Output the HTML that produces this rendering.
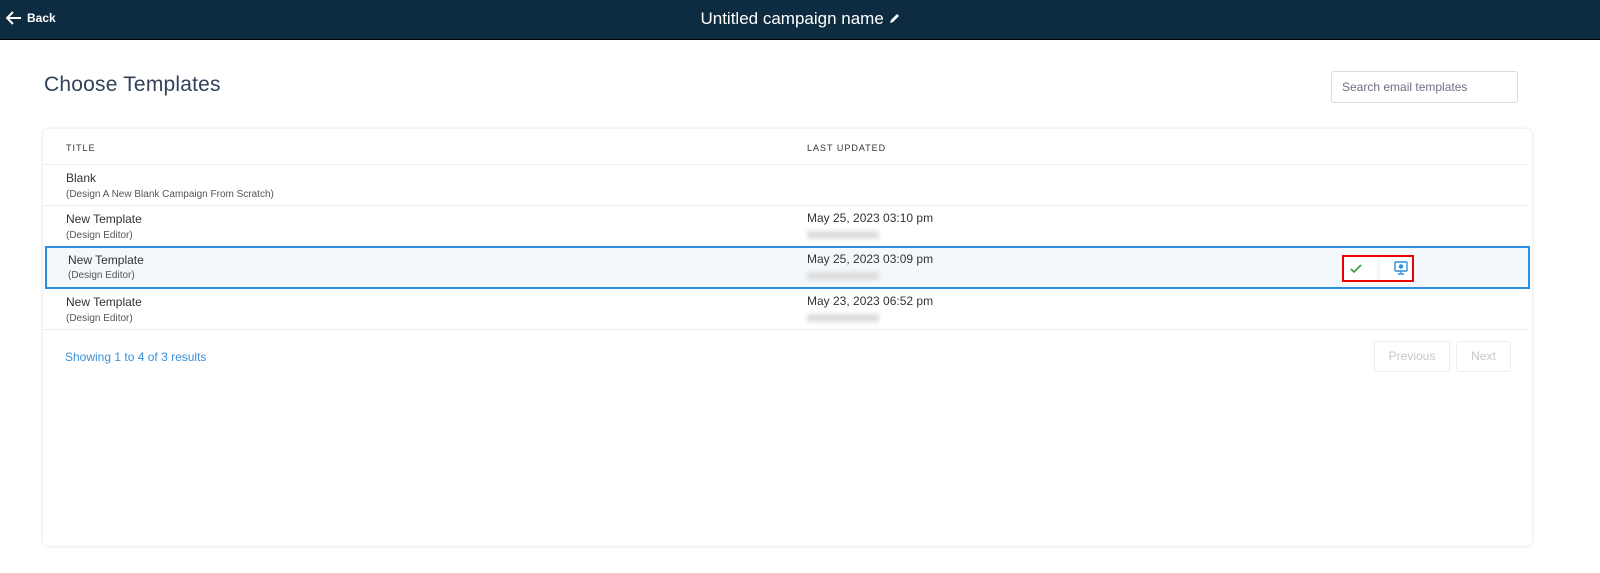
<!DOCTYPE html>
<html><head><style>
*{box-sizing:border-box;margin:0;padding:0}
body{width:1600px;height:573px;background:#fff;font-family:"Liberation Sans",Arial,sans-serif;position:relative;overflow:hidden}
.top{position:absolute;left:0;top:0;width:1600px;height:40px;background:#0e2c41;border-bottom:1px solid #000}
.back{position:absolute;left:6px;top:11px;color:#fff;font-size:12px;font-weight:bold;display:flex;align-items:center;gap:5px}
.title{position:absolute;left:0;right:0;top:9px;text-align:center;color:#fff;font-size:17px}
h1{position:absolute;left:44px;top:73px;font-size:21px;font-weight:normal;color:#33425a;letter-spacing:.2px}
.search{position:absolute;left:1331px;top:71px;width:187px;height:32px;border:1px solid #d8dbe0;border-radius:3px;font-size:12px;color:#6b7280;padding:8px 10px}
.card{position:absolute;left:43px;top:129px;width:1489px;height:417px;border-radius:5px;box-shadow:0 0 3px rgba(0,0,0,.15);background:#fff}
.row{position:absolute;left:0;width:1486px;border-bottom:1px solid #eceef1}
.t1{position:absolute;left:23px;font-size:12px;color:#333}
.t2{position:absolute;left:23px;font-size:10px;color:#555}
.d{position:absolute;left:764px;font-size:12px;color:#333}
.blur{position:absolute;left:764px;width:72px;height:8px;background:#ddd;filter:blur(2px)}
.hl{position:absolute;left:2px;top:117px;width:1485px;height:43px;border:2px solid #2d8ee0;background:#f3f8fc}
.btn{position:absolute;top:369px;height:31px;border:1px solid #eceef1;border-radius:3px;font-size:12px;color:#c4c7cc;text-align:center;line-height:29px}
</style></head><body>
<div class="top">
<div class="back"><svg width="16" height="14" viewBox="0 0 16 14"><path d="M15 7H2M7 1L1 7l6 6" stroke="#fff" stroke-width="2" fill="none"/></svg>Back</div>
<div class="title">Untitled campaign name <svg width="11" height="11" viewBox="0 0 11 11"><path d="M1 10l1-3 6-6 2 2-6 6z" fill="#fff"/></svg></div>
</div>
<h1>Choose Templates</h1>
<div class="search">Search email templates</div>
<div class="card">
<div class="row" style="top:0;height:36px"><span style="position:absolute;left:23px;top:14px;font-size:9px;letter-spacing:1px;color:#333">TITLE</span><span style="position:absolute;left:764px;top:14px;font-size:9px;letter-spacing:1px;color:#333">LAST UPDATED</span></div>
<div class="row" style="top:36px;height:41px"><span class="t1" style="top:6px">Blank</span><span class="t2" style="top:24px">(Design A New Blank Campaign From Scratch)</span></div>
<div class="row" style="top:77px;height:41px"><span class="t1" style="top:6px">New Template</span><span class="t2" style="top:24px">(Design Editor)</span><span class="d" style="top:5px">May 25, 2023 03:10 pm</span><div class="blur" style="top:25px"></div></div>
<div class="hl"><span class="t1" style="top:5px;left:21px">New Template</span><span class="t2" style="top:22px;left:21px">(Design Editor)</span><span class="d" style="top:4px;left:760px">May 25, 2023 03:09 pm</span><div class="blur" style="top:24px;left:760px"></div>
<div style="position:absolute;left:1295px;top:7px;width:72px;height:27px;border:2px solid #e00;background:#fff">
<svg style="position:absolute;left:6px;top:7px" width="12" height="10" viewBox="0 0 12 10"><path d="M1 5l3 3 7-7" stroke="#3a9a3a" stroke-width="1.6" fill="none"/></svg>
<div style="position:absolute;left:33px;top:0;width:3px;height:23px;background:#f3f8fc"></div>
<svg style="position:absolute;left:50px;top:4px" width="14" height="14" viewBox="0 0 14 14"><rect x="1" y="1" width="12" height="9" rx="1" fill="none" stroke="#2d8ee0" stroke-width="1.4"/><circle cx="7" cy="5.5" r="2.2" fill="#2d8ee0"/><path d="M7 10v2M4 13h6" stroke="#2d8ee0" stroke-width="1.4"/></svg>
</div></div>
<div class="row" style="top:160px;height:41px"><span class="t1" style="top:6px">New Template</span><span class="t2" style="top:24px">(Design Editor)</span><span class="d" style="top:5px">May 23, 2023 06:52 pm</span><div class="blur" style="top:25px"></div></div>
<span style="position:absolute;left:22px;top:221px;font-size:12px;color:#3b8fd6">Showing 1 to 4 of 3 results</span>
<div class="btn" style="left:1331px;width:76px;top:212px">Previous</div>
<div class="btn" style="left:1413px;width:55px;top:212px">Next</div>
</div>
</body></html>
